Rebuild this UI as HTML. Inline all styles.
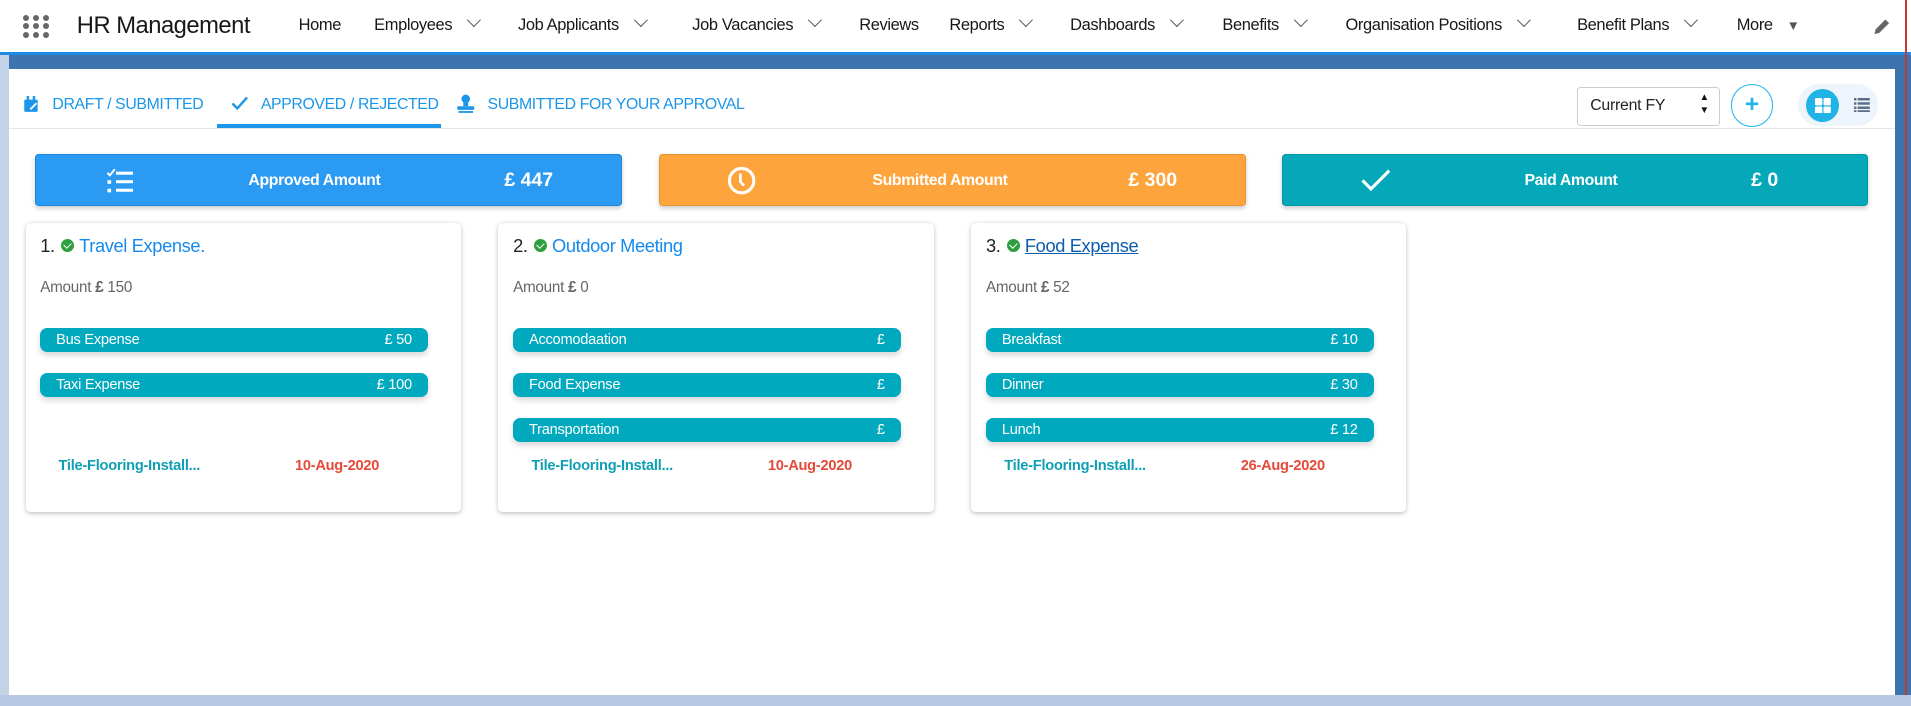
<!DOCTYPE html>
<html><head><meta charset="utf-8"><style>
*{box-sizing:border-box;margin:0;padding:0}
html,body{width:1911px;height:706px;overflow:hidden}
body{font-family:"Liberation Sans",sans-serif;background:#b0c4de}
#z{zoom:1.21875;width:1568px;height:580px;position:relative;background:#3d74b0}
.hdr{position:absolute;left:0;top:0;width:1568px;background:#fff;border-bottom:3px solid #1e8ce6;height:45px}
.hdr .t{position:absolute;top:13px;font-size:13.5px;color:#181818;letter-spacing:-0.3px}
.chev{display:inline-block;width:8px;height:8px;border-right:1.3px solid #555;border-bottom:1.3px solid #555;transform:rotate(45deg);margin-left:14px;position:relative;top:-4px}
.dots{position:absolute;left:19px;top:12px;width:22px;height:20px}
.dots i{position:absolute;width:5px;height:5px;border-radius:50%;background:#666}
.redl{position:absolute;right:3px;top:0;width:2px;height:580px;background:#c23934}
.leftl{position:absolute;left:0;top:45px;width:7px;height:535px;background:#c2d3e8}
.panel{position:absolute;left:7px;top:57px;width:1548px;height:513px;background:#fff}
.botl{position:absolute;left:0;top:570px;width:1568px;height:10px;background:#b7c9e2}
.tab{position:absolute;top:22px;font-size:13px;color:#1b96e8;letter-spacing:-0.3px}
.stat{position:absolute;top:69px;height:43px;width:481px;border-radius:3px;color:#fff;font-weight:bold;font-size:13px;box-shadow:0 2px 4px rgba(0,0,0,.2)}
.stat .l{position:absolute;left:174px;top:14px;letter-spacing:-0.3px}
.stat .v{position:absolute;left:384px;top:12px;font-size:16px}
.card{position:absolute;top:126px;width:357px;height:237px;background:#fff;border-radius:4px;box-shadow:0 1px 4px rgba(0,0,0,.25)}
.card h3{position:absolute;left:12px;top:10px;font-size:15px;font-weight:normal;color:#222;letter-spacing:-0.3px}
.card h3 b{font-weight:normal;color:#1589ee;margin-left:4px}
.ok{display:inline-block;width:11px;height:11px;border-radius:50%;background:#2e9e3e;margin-left:5px;position:relative;top:0px}
.ok:after{content:"";position:absolute;left:3.5px;top:2px;width:3px;height:5px;border-right:1.5px solid #fff;border-bottom:1.5px solid #fff;transform:rotate(45deg)}
.amt{position:absolute;left:12px;top:46px;font-size:12.5px;color:#666;letter-spacing:-0.2px}
.pill{position:absolute;left:12px;width:318px;height:20px;border-radius:6px;background:#00a9bd;color:#fff;font-size:12px;line-height:20px;padding:0 13px 0 13px;box-shadow:0 3px 5px rgba(0,0,0,.15);letter-spacing:-0.2px}
.pill span{float:right}
.ft{position:absolute;top:193px;font-size:12px;font-weight:bold;letter-spacing:-0.2px}
</style></head><body><div id="z">
<div class="hdr">
 <div class="dots"><i style="left:0;top:0"></i><i style="left:8px;top:0"></i><i style="left:16px;top:0"></i><i style="left:0;top:7px"></i><i style="left:8px;top:7px"></i><i style="left:16px;top:7px"></i><i style="left:0;top:14px"></i><i style="left:8px;top:14px"></i><i style="left:16px;top:14px"></i></div>
 <div class="t" style="left:63px;top:10px;font-size:19.5px;letter-spacing:-0.4px">HR Management</div>
 <div class="t" style="left:245px">Home</div>
 <div class="t" style="left:307px">Employees<span class="chev"></span></div>
 <div class="t" style="left:425px">Job Applicants<span class="chev"></span></div>
 <div class="t" style="left:568px">Job Vacancies<span class="chev"></span></div>
 <div class="t" style="left:705px">Reviews</div>
 <div class="t" style="left:779px">Reports<span class="chev"></span></div>
 <div class="t" style="left:878px">Dashboards<span class="chev"></span></div>
 <div class="t" style="left:1003px">Benefits<span class="chev"></span></div>
 <div class="t" style="left:1104px">Organisation Positions<span class="chev"></span></div>
 <div class="t" style="left:1294px">Benefit Plans<span class="chev"></span></div>
 <div class="t" style="left:1425px">More <span style="font-size:11px;color:#555;margin-left:8px">▼</span></div>
 <svg style="position:absolute;left:1536px;top:14px" width="16" height="16" viewBox="0 0 16 16"><path d="M2 14l1-4 8-8 3 3-8 8z" fill="#666"/></svg>
</div>
<div class="redl"></div><div class="leftl"></div><div class="botl"></div>
<div class="panel">
 <svg style="position:absolute;left:12px;top:22px" width="14" height="14" viewBox="0 0 14 14"><rect x="1" y="3" width="11" height="10" rx="1" fill="#1b96e8"/><rect x="3" y="0" width="2" height="4" fill="#1b96e8"/><rect x="8" y="0" width="2" height="4" fill="#1b96e8"/><path d="M6 11l5-5" stroke="#fff" stroke-width="1.5"/></svg>
 <div class="tab" style="left:36px">DRAFT / SUBMITTED</div>
 <svg style="position:absolute;left:182px;top:21px" width="16" height="14"><path d="M2 7l4 4 8-9" stroke="#1b96e8" stroke-width="2" fill="none"/></svg>
 <div class="tab" style="left:207px">APPROVED / REJECTED</div>
 <div style="position:absolute;left:171px;top:45px;width:184px;height:3px;background:#1b96e8"></div>
 <svg style="position:absolute;left:367px;top:20px" width="16" height="16"><circle cx="8" cy="4" r="3.5" fill="#1b96e8"/><rect x="6" y="6" width="4" height="4" fill="#1b96e8"/><rect x="1" y="10" width="14" height="3" rx="1" fill="#1b96e8"/><rect x="2" y="14" width="12" height="1.5" fill="#1b96e8"/></svg>
 <div class="tab" style="left:393px">SUBMITTED FOR YOUR APPROVAL</div>
 <div style="position:absolute;left:0;top:48px;width:1548px;height:1px;background:#e5e5e5"></div>
 <div style="position:absolute;left:1287px;top:14px;width:117px;height:32px;border:1px solid #ccc;border-radius:3px;font-size:13px;color:#222;padding:8px 10px;letter-spacing:-0.2px">Current FY<span style="position:absolute;right:8px;top:4px;font-size:8px;line-height:10px;color:#111">▲<br>▼</span></div>
 <div style="position:absolute;left:1413px;top:12px;width:35px;height:35px;border:1px solid #1fb3e6;border-radius:50%;color:#1fb3e6;text-align:center;font-size:20px;line-height:32px;font-weight:bold">+</div>
 <div style="position:absolute;left:1468px;top:12px;width:66px;height:34px;border-radius:17px;background:#edf4fb"></div>
 <div style="position:absolute;left:1475px;top:16px;width:27px;height:27px;border-radius:50%;background:#1fb3e6"></div>
 <svg style="position:absolute;left:1482px;top:23px" width="13" height="13"><rect x="0" y="0" width="6" height="6" rx="1" fill="#fff"/><rect x="7" y="0" width="6" height="6" rx="1" fill="#fff"/><rect x="0" y="7" width="6" height="6" rx="1" fill="#fff"/><rect x="7" y="7" width="6" height="6" rx="1" fill="#fff"/></svg>
 <svg style="position:absolute;left:1514px;top:23px" width="13" height="12"><g fill="#5a6f86"><rect x="0" y="0" width="2" height="2"/><rect x="3" y="0" width="10" height="2"/><rect x="0" y="3.5" width="2" height="2"/><rect x="3" y="3.5" width="10" height="2"/><rect x="0" y="7" width="2" height="2"/><rect x="3" y="7" width="10" height="2"/><rect x="0" y="10" width="2" height="2"/><rect x="3" y="10" width="10" height="2"/></g></svg>

 <div class="stat" style="left:22px;background:#2b9af3;border:1px solid #1a86dd">
  <svg style="position:absolute;left:56px;top:11px" width="24" height="22"><path d="M2 4l2 2 4-5" stroke="#fff" stroke-width="1.6" fill="none"/><rect x="2" y="10" width="3" height="3" fill="#fff"/><rect x="2" y="17" width="3" height="3" fill="#fff"/><rect x="9" y="3" width="14" height="2.5" fill="#fff"/><rect x="9" y="10" width="14" height="2.5" fill="#fff"/><rect x="9" y="17" width="14" height="2.5" fill="#fff"/></svg>
  <div class="l">Approved Amount</div><div class="v">£ 447</div></div>
 <div class="stat" style="left:534px;background:#fea43d;border:1px solid #e89530">
  <svg style="position:absolute;left:55px;top:9px" width="24" height="24"><circle cx="12" cy="12" r="10" stroke="#fff" stroke-width="2.5" fill="none"/><path d="M11 6v7l3 3" stroke="#fff" stroke-width="2.2" fill="none"/></svg>
  <div class="l">Submitted Amount</div><div class="v">£ 300</div></div>
 <div class="stat" style="left:1045px;background:#04a8b8;border:1px solid #0398a6">
  <svg style="position:absolute;left:63px;top:10px" width="26" height="22"><path d="M2 11l7 7L24 3" stroke="#fff" stroke-width="2.6" fill="none"/></svg>
  <div class="l" style="left:198px">Paid Amount</div><div class="v">£ 0</div></div>

 <div class="card" style="left:14px">
  <h3>1.<span class="ok"></span><b>Travel Expense.</b></h3>
  <div class="amt">Amount <b>£</b> 150</div>
  <div class="pill" style="top:86px">Bus Expense<span>£ 50</span></div>
  <div class="pill" style="top:123px">Taxi Expense<span>£ 100</span></div>
  <div class="ft" style="left:27px;color:#0f9fb4">Tile-Flooring-Install...</div>
  <div class="ft" style="left:221px;color:#e5493a">10-Aug-2020</div>
 </div>
 <div class="card" style="left:402px">
  <h3>2.<span class="ok"></span><b>Outdoor Meeting</b></h3>
  <div class="amt">Amount <b>£</b> 0</div>
  <div class="pill" style="top:86px">Accomodaation<span>£</span></div>
  <div class="pill" style="top:123px">Food Expense<span>£</span></div>
  <div class="pill" style="top:160px">Transportation<span>£</span></div>
  <div class="ft" style="left:27px;color:#0f9fb4">Tile-Flooring-Install...</div>
  <div class="ft" style="left:221px;color:#e5493a">10-Aug-2020</div>
 </div>
 <div class="card" style="left:790px">
  <h3>3.<span class="ok"></span><b style="color:#0b5cad;text-decoration:underline">Food Expense</b></h3>
  <div class="amt">Amount <b>£</b> 52</div>
  <div class="pill" style="top:86px">Breakfast<span>£ 10</span></div>
  <div class="pill" style="top:123px">Dinner<span>£ 30</span></div>
  <div class="pill" style="top:160px">Lunch<span>£ 12</span></div>
  <div class="ft" style="left:27px;color:#0f9fb4">Tile-Flooring-Install...</div>
  <div class="ft" style="left:221px;color:#e5493a">26-Aug-2020</div>
 </div>
</div>
</div></body></html>
